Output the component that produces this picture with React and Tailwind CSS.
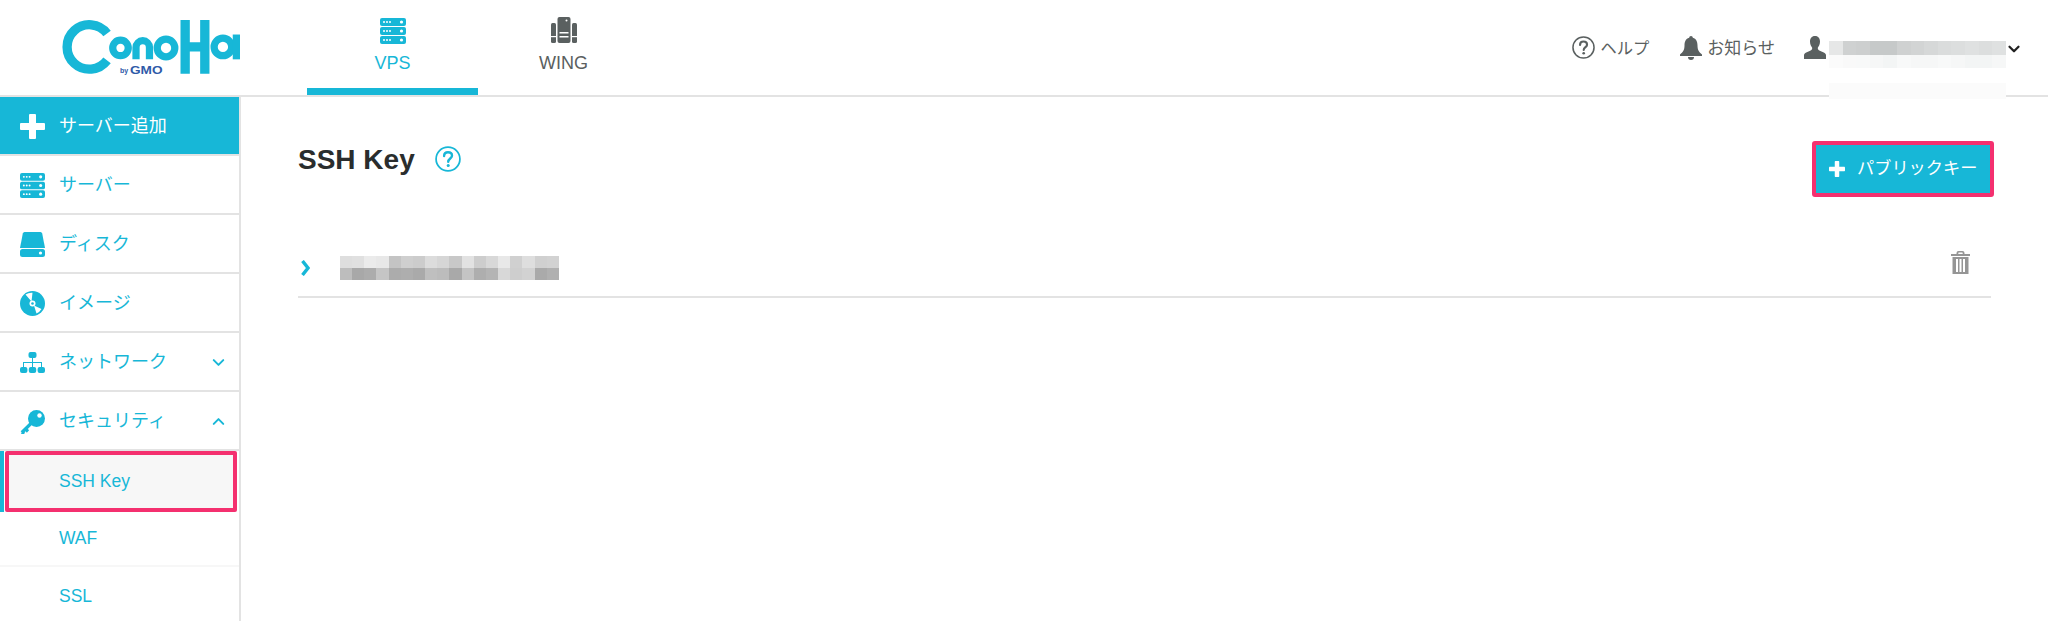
import React from 'react'
import { ChevronDown, ChevronUp } from 'lucide-react'

const CYAN = '#17b7d7'

const HEADER_TOP = ['#e6e7e7', '#cfd1d1', '#cdcfcf', '#c6c9c9', '#c6c9c9', '#cfd1d1', '#d2d4d4', '#d6d8d8', '#dadcdc', '#dcdede', '#dfe1e1', '#dcdede', '#dfe1e1']
const HEADER_MID = ['#fbfbfb', '#f9f9f9', '#f8f9f9', '#f6f7f7', '#f3f5f5', '#f8f9f9', '#f6f7f7', '#f6f7f7', '#f8f9f9', '#f6f7f7', '#f3f5f5', '#f3f5f5', '#f6f7f7']
const ROW_TOP = ['#dedede', '#e0e0e0', '#ebebeb', '#e8e8e8', '#c4c4c4', '#cfcfcf', '#cccccc', '#dcdcdc', '#d6d6d6', '#c8c8c8', '#e2e2e2', '#cdcdcd', '#d8d8d8', '#e8e8e8', '#d0d0d0', '#dedede', '#d0d0d0', '#d2d2d2']
const ROW_BOTTOM = ['#bdbdbd', '#a8a8a8', '#acacac', '#c5c5c5', '#acacac', '#aeaeae', '#aaaaaa', '#bfbfbf', '#bcbcbc', '#a9a9a9', '#c4c4c4', '#aeaeae', '#b4b4b4', '#d8d8d8', '#cecece', '#d2d2d2', '#aaaaaa', '#b0b0b0']

function Mosaic({ colors, cellClass }) {
  return (
    <div className="flex">
      {colors.map((c, i) => (
        <div key={i} className={cellClass} style={{ backgroundColor: c }} />
      ))}
    </div>
  )
}

function Logo() {
  return (
    <div className="relative w-[187px] h-[60px] shrink-0">
      <svg width="187" height="60" viewBox="60 20 180 58" fill="none" stroke={CYAN}>
        <path d="M108 34 A21.5 21.5 0 1 0 108 60" strokeWidth="9" />
        <circle cx="121" cy="48" r="7.5" strokeWidth="7" />
        <path d="M136 59 V47.5 A6.5 6.5 0 0 1 149 47.5 V59" strokeWidth="7" />
        <circle cx="165" cy="48" r="8.5" strokeWidth="7" />
        <path d="M183.5 21 V73 M202.5 21 V73 M183 47 H203" strokeWidth="9" />
        <circle cx="220" cy="47" r="8.5" strokeWidth="7" />
        <path d="M233 35 V59" strokeWidth="7" />
      </svg>
      <span className="absolute left-[63px] top-[48px] text-[7px] font-bold text-[#2f5aa8] leading-none">by</span>
      <span className="absolute left-[73px] top-[46px] text-[10.5px] font-bold text-[#2f5aa8] leading-[10px] scale-x-[1.3] origin-left">GMO</span>
    </div>
  )
}

function ServerIcon({ size = 26, color = CYAN }) {
  return (
    <svg width={size} height={size} viewBox="0 0 26 26">
      {[0, 9, 18].map((y) => (
        <g key={y}>
          <rect x="0" y={y} width="26" height="8" rx="2" fill={color} />
          <circle cx="4" cy={y + 4} r="1" fill="#fff" />
          <circle cx="7" cy={y + 4} r="1" fill="#fff" />
          <circle cx="10" cy={y + 4} r="1" fill="#fff" />
          <circle cx="21.5" cy={y + 4} r="1.6" fill="#fff" />
        </g>
      ))}
    </svg>
  )
}

function WingIcon() {
  return (
    <svg width="26" height="26" viewBox="0 0 26 26" fill="#5a6060">
      <rect x="0" y="6" width="5" height="20" rx="1.5" />
      <rect x="21" y="6" width="5" height="20" rx="1.5" />
      <rect x="6.5" y="0" width="13" height="26" rx="2" />
      <circle cx="15.5" cy="3.5" r="1" fill="#fff" />
      <rect x="8.5" y="15" width="9" height="1.5" fill="#fff" />
      <rect x="8.5" y="19" width="9" height="1.5" fill="#fff" />
      <rect x="0" y="19" width="5" height="1.2" fill="#fff" />
      <rect x="21" y="19" width="5" height="1.2" fill="#fff" />
    </svg>
  )
}

function PlusIcon({ size = 25 }) {
  return (
    <svg width={size} height={size} viewBox="0 0 25 25" fill="#fff">
      <rect x="9" y="0" width="7" height="25" rx="1" />
      <rect x="0" y="9" width="25" height="7" rx="1" />
    </svg>
  )
}

function DiskIcon() {
  return (
    <svg width="25" height="25" viewBox="0 0 25 25" fill={CYAN}>
      <path d="M4.5 0 H20.5 Q21.8 0 22.2 1.5 L25 16 H0 L2.8 1.5 Q3.2 0 4.5 0 Z" />
      <rect x="0" y="17" width="25" height="8" rx="2.5" />
      <circle cx="20.5" cy="21" r="1.6" fill="#fff" />
    </svg>
  )
}

function DiscIcon() {
  return (
    <svg width="25" height="25" viewBox="0 0 25 25">
      <circle cx="12.5" cy="12.5" r="12.5" fill={CYAN} />
      <path d="M11.5 10.5 L5.5 3.5 A11.5 11.5 0 0 1 12.5 1.8 Z M14 14.5 L21.5 18 A11 11 0 0 1 16.5 22.5 Z" fill="#fff" />
      <circle cx="12.5" cy="12.5" r="3" fill="#fff" />
      <circle cx="12.5" cy="12.5" r="1.3" fill={CYAN} />
    </svg>
  )
}

function NetworkIcon() {
  return (
    <svg width="25" height="21" viewBox="0 0 25 21" fill={CYAN}>
      <rect x="8.5" y="0" width="8" height="6" rx="2" />
      <rect x="12" y="6" width="1" height="9" />
      <rect x="3" y="10" width="19" height="1" />
      <rect x="3" y="10" width="1" height="5" />
      <rect x="21" y="10" width="1" height="5" />
      <rect x="0" y="15" width="7.4" height="6" rx="2" />
      <rect x="8.8" y="15" width="7.4" height="6" rx="2" />
      <rect x="17.6" y="15" width="7.4" height="6" rx="2" />
    </svg>
  )
}

function KeyIcon() {
  return (
    <svg width="25" height="24" viewBox="0 0 25 24">
      <circle cx="16.5" cy="8.5" r="8.5" fill={CYAN} />
      <circle cx="19.5" cy="5.5" r="2.2" fill="#fff" />
      <path d="M12 12.5 L1.8 22.5 M5.5 19 L8 21.5 M2 22 L4 24" stroke={CYAN} strokeWidth="3.2" fill="none" />
    </svg>
  )
}

function HelpIcon({ size, color }) {
  return (
    <svg width={size} height={size} viewBox="0 0 24 24" fill="none" stroke={color}>
      <circle cx="12" cy="12" r="11" strokeWidth="1.6" />
      <path d="M8.4 9.3 C8.4 7 10 5.8 12 5.8 C14.2 5.8 15.7 7.1 15.7 9 C15.7 11.5 12.2 11.7 12.2 14.6" strokeWidth="2.2" strokeLinecap="round" />
      <circle cx="12.2" cy="18" r="1.4" fill={color} stroke="none" />
    </svg>
  )
}

function BellIcon() {
  return (
    <svg width="22" height="24" viewBox="0 0 22 24" fill="#5a6060">
      <circle cx="11" cy="1.8" r="1.8" />
      <path d="M11 1.5 C16 1.5 17.5 5.5 17.5 9.5 C17.5 14 19 16 22 18.5 V20 H0 V18.5 C3 16 4.5 14 4.5 9.5 C4.5 5.5 6 1.5 11 1.5 Z" />
      <path d="M8 21 H14 A3 3 0 0 1 8 21 Z" />
    </svg>
  )
}

function UserIcon() {
  return (
    <svg width="22" height="23" viewBox="0 0 22 23" fill="#5a6060">
      <path d="M11 0 C14.5 0 16 2.6 16 5.6 C16 8.4 14.8 10.6 13.8 11.8 C13.5 13.6 15 14.5 17.5 15.4 C20 16.3 22 17.3 22 19 V23 H0 V19 C0 17.3 2 16.3 4.5 15.4 C7 14.5 8.5 13.6 8.2 11.8 C7.2 10.6 6 8.4 6 5.6 C6 2.6 7.5 0 11 0 Z" />
    </svg>
  )
}

function TrashIcon() {
  return (
    <svg width="19" height="23" viewBox="0 0 19 23" fill="#959595">
      <path d="M5.5 3 V2 Q5.5 0 7.5 0 H11.5 Q13.5 0 13.5 2 V3 H19 V5 H0 V3 Z M7.3 3 H11.7 V2 Q11.7 1.6 11.3 1.6 H7.7 Q7.3 1.6 7.3 2 Z" fillRule="evenodd" />
      <path d="M1.5 6 H17.5 V23 H1.5 Z M5 8 V21 H7 V8 Z M8.5 8 V21 H10.5 V8 Z M12 8 V21 H14 V8 Z" fillRule="evenodd" />
    </svg>
  )
}

function SideItem({ icon, label, chevron }) {
  return (
    <div className="h-[59px] border-b-2 border-[#e3e3e3] flex items-center pt-[2px] pl-[20px] pr-[11px] text-[#17b7d7]">
      <div className="w-[25px] flex justify-center shrink-0">{icon}</div>
      <span className="ml-[14px] flex-1 text-[18px]">{label}</span>
      {chevron === 'down' && <ChevronDown size={19} strokeWidth={2.5} />}
      {chevron === 'up' && <ChevronUp size={19} strokeWidth={2.5} />}
    </div>
  )
}

function Sidebar() {
  return (
    <aside className="w-[241px] shrink-0 border-r-2 border-[#e3e3e3] h-full">
      <div className="h-[59px] border-b-2 border-[#e3e3e3] bg-[#17b7d7] flex items-center pt-[2px] pl-[20px] text-white">
        <PlusIcon />
        <span className="ml-[14px] text-[18px]">サーバー追加</span>
      </div>
      <SideItem icon={<ServerIcon size={25} />} label="サーバー" />
      <SideItem icon={<DiskIcon />} label="ディスク" />
      <SideItem icon={<DiscIcon />} label="イメージ" />
      <SideItem icon={<NetworkIcon />} label="ネットワーク" chevron="down" />
      <SideItem icon={<KeyIcon />} label="セキュリティ" chevron="up" />
      <div className="h-[61px] border-l-[4px] border-[#17b7d7] pl-px pr-[2px]">
        <div className="h-full bg-[#f7f7f7] border-4 border-[#f4306f] rounded-[2px] flex items-center pl-[50px] text-[17.5px] text-[#17b7d7]">
          SSH Key
        </div>
      </div>
      <div className="h-[55px] border-b-2 border-[#f7f7f7] flex items-center pl-[59px] text-[17.5px] text-[#17b7d7]">WAF</div>
      <div className="h-[59px] flex items-center pl-[59px] text-[17.5px] text-[#17b7d7]">SSL</div>
    </aside>
  )
}

function Header() {
  return (
    <header className="relative h-[97px] border-b-2 border-[#e3e3e3] flex items-start">
      <div className="ml-[57px] mt-[19px]">
        <Logo />
      </div>
      <nav className="ml-[63px] flex h-[95px]">
        <div className="w-[171px] h-[95px] border-b-[7px] border-[#17b7d7] flex flex-col items-center pt-[18px] text-[#17b7d7]">
          <ServerIcon />
          <span className="mt-[6px] text-[18px] leading-[26px]">VPS</span>
        </div>
        <div className="w-[171px] h-[95px] flex flex-col items-center pt-[17px] text-[#5a6060]">
          <WingIcon />
          <span className="mt-[7px] text-[18px] leading-[26px]">WING</span>
        </div>
      </nav>
      <div className="ml-auto h-[95px] flex items-center text-[#5a6060] pr-[25px]">
        <HelpIcon size={23} color="#5a6060" />
        <span className="ml-[5px] mt-[2px] text-[16.3px]">ヘルプ</span>
        <div className="ml-[31px]"><BellIcon /></div>
        <span className="ml-[5px] mt-[2px] text-[17px]">お知らせ</span>
        <div className="ml-[29px]"><UserIcon /></div>
        <div className="w-[178px] ml-px" />
        <ChevronDown size={18} strokeWidth={3} className="text-[#222] mt-[2px]" />
      </div>
      {/* mosaic that hides the account name, it runs over the header line */}
      <div className="absolute left-[1829px] top-[41px] w-[177px]">
        <Mosaic colors={HEADER_TOP} cellClass="w-[13.6px] h-[14px]" />
        <Mosaic colors={HEADER_MID} cellClass="w-[13.6px] h-[13px]" />
        <div className="mt-[15px] h-[16px] bg-[#fbfbfb]" />
      </div>
    </header>
  )
}

function Main() {
  return (
    <main className="flex-1 pl-[57px] pr-[57px] pt-[44px]">
      <div className="flex items-start justify-between">
        <div className="flex items-center mt-[2px] h-[34px]">
          <h1 className="text-[28px] font-bold text-[#2a2d2d] leading-none">SSH Key</h1>
          <div className="ml-[20px] -mt-[2px]"><HelpIcon size={26} color={CYAN} /></div>
        </div>
        <button className="h-[56px] w-[182px] -mr-[3px] bg-[#17b7d7] border-4 border-[#f4306f] rounded-[3px] flex items-center pl-[13px] text-white">
          <PlusIcon size={16} />
          <span className="ml-[12px] text-[17.2px]">パブリックキー</span>
        </button>
      </div>
      <div className="mt-[43px] h-[58px] border-b-2 border-[#e3e3e3] flex items-center">
        <svg width="9" height="16" viewBox="0 0 9 16" fill="none" stroke={CYAN} strokeWidth="3.4" className="ml-[3px]">
          <path d="M1.5 1 L7 8 L1.5 15" />
        </svg>
        <div className="ml-[30px]">
          <Mosaic colors={ROW_TOP} cellClass="w-[12.17px] h-[12px]" />
          <Mosaic colors={ROW_BOTTOM} cellClass="w-[12.17px] h-[12px]" />
        </div>
        <div className="ml-auto mr-[21px] -mt-[11px]"><TrashIcon /></div>
      </div>
    </main>
  )
}

export default function App() {
  return (
    <div className="w-[2048px] h-[621px] overflow-hidden bg-white font-['Liberation_Sans','Noto_Sans_CJK_JP',sans-serif]">
      <Header />
      <div className="flex h-[524px]">
        <Sidebar />
        <Main />
      </div>
    </div>
  )
}
